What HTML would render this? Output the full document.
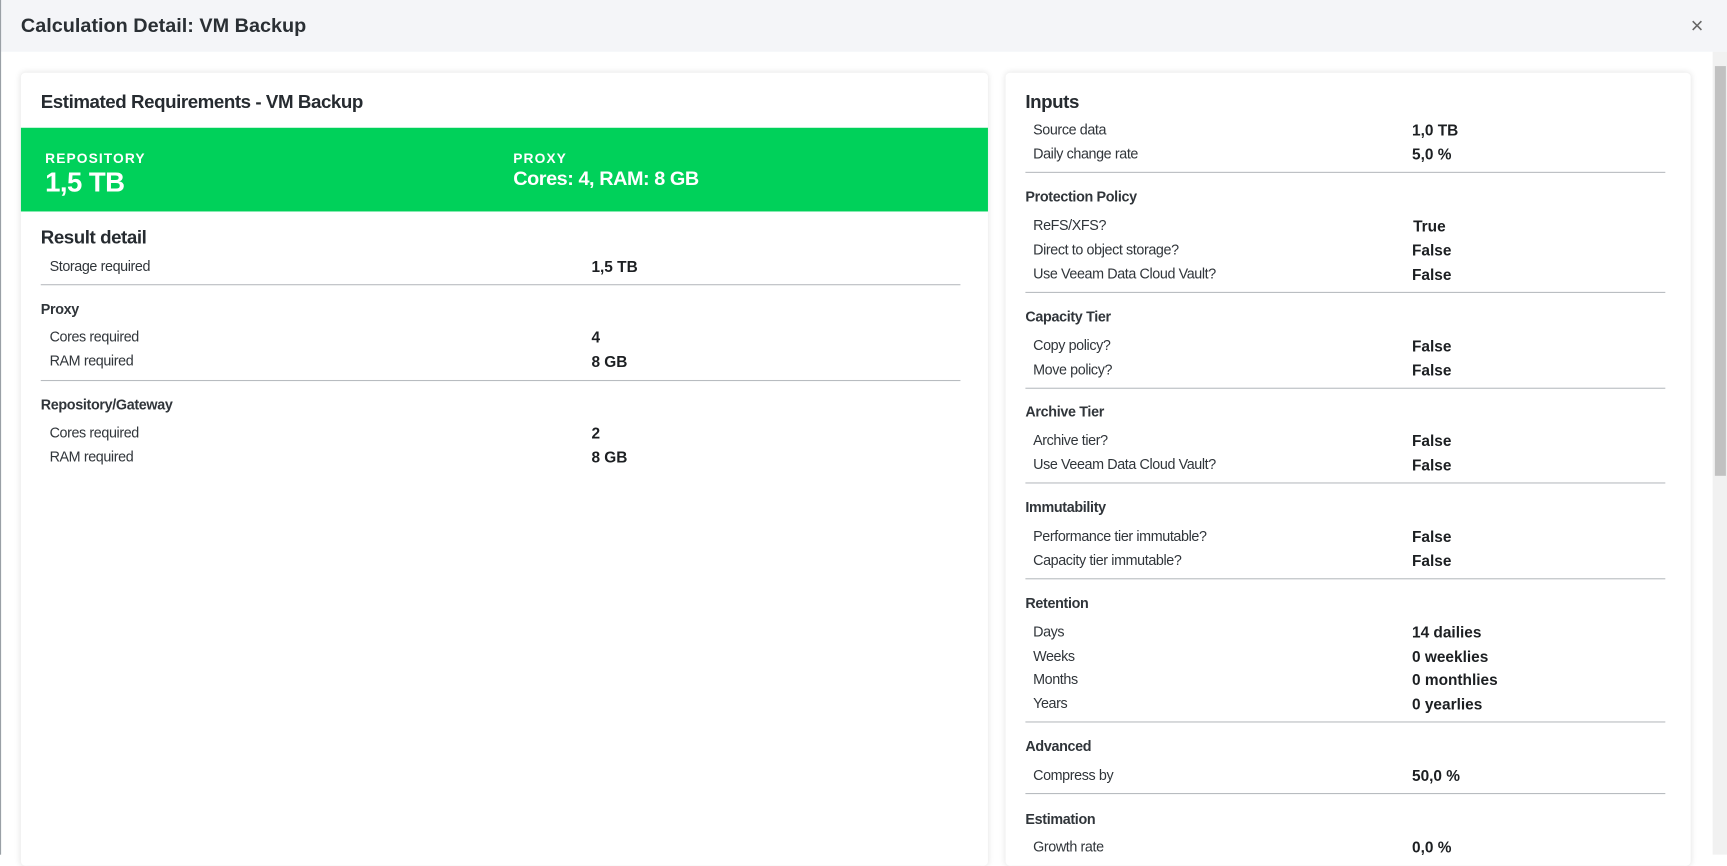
<!DOCTYPE html>
<html><head><meta charset="utf-8"><style>
html,body{margin:0;padding:0;width:1727px;height:855px;overflow:hidden;background:#fff}
#w{position:absolute;left:0;top:0;width:1568px;height:776px;transform:scale(1.1014);transform-origin:0 0;font-family:"Liberation Sans",sans-serif;color:#2b3035}
.hdr{position:absolute;left:0;top:0;width:1568px;height:47px;background:#f4f5f8}
.lb{position:absolute;left:0;top:0;width:1px;height:776px;background:#9aa0a6}
.t{position:absolute;white-space:nowrap;line-height:18px}
.card{position:absolute;background:#fff;border-radius:4px;box-shadow:0 0 6px rgba(0,0,0,.12)}
.l{font-size:13px;letter-spacing:-0.35px;color:#30353a}
.v{font-size:14px;font-weight:bold;color:#1c1f22}
.h{font-size:13px;font-weight:bold;letter-spacing:-0.3px;color:#30353a}
.big{font-size:17px;font-weight:bold;letter-spacing:-0.4px;color:#262b30}
.d{position:absolute;height:1px;background:#b8bcc0}
</style></head><body><div id="w">
<div class="hdr"></div><div class="lb"></div>
<div class="t" style="left:19px;top:13px;font-size:18px;font-weight:bold;color:#2a2f34;line-height:20px">Calculation Detail: VM Backup</div>
<div class="t" style="left:1535px;top:13px;font-size:20px;color:#666;line-height:22px">×</div>
<div style="position:absolute;left:1555px;top:47px;width:13px;height:729px;background:#f1f1f1"></div>
<div style="position:absolute;left:1557px;top:60px;width:10px;height:372px;background:#c1c1c1"></div>

<div class="card" style="left:19px;top:66px;width:878px;height:720px"></div>
<div class="t big" style="left:37px;top:84px">Estimated Requirements - VM Backup</div>
<div style="position:absolute;left:19px;top:116px;width:878px;height:76px;background:#00d15a"></div>
<div class="t" style="left:41px;top:135px;font-size:12.5px;font-weight:bold;letter-spacing:1px;color:#fff">REPOSITORY</div>
<div class="t" style="left:41px;top:152px;font-size:25px;font-weight:bold;color:#fff;line-height:28px;letter-spacing:-0.5px">1,5 TB</div>
<div class="t" style="left:466px;top:135px;font-size:12.5px;font-weight:bold;letter-spacing:1px;color:#fff">PROXY</div>
<div class="t" style="left:466px;top:151px;font-size:18px;font-weight:bold;color:#fff;line-height:22px;letter-spacing:-0.4px">Cores: 4, RAM: 8 GB</div>
<div class="t big" style="left:37px;top:207px">Result detail</div>
<div class="t l" style="left:45px;top:233px">Storage required</div><div class="t v" style="left:537px;top:233px">1,5 TB</div>
<div class="d" style="left:37px;top:258px;width:835px"></div>
<div class="t h" style="left:37px;top:272px">Proxy</div>
<div class="t l" style="left:45px;top:297px">Cores required</div><div class="t v" style="left:537px;top:297px">4</div>
<div class="t l" style="left:45px;top:319px">RAM required</div><div class="t v" style="left:537px;top:319px">8 GB</div>
<div class="d" style="left:37px;top:345px;width:835px"></div>
<div class="t h" style="left:37px;top:359px">Repository/Gateway</div>
<div class="t l" style="left:45px;top:384px">Cores required</div><div class="t v" style="left:537px;top:384px">2</div>
<div class="t l" style="left:45px;top:406px">RAM required</div><div class="t v" style="left:537px;top:406px">8 GB</div>

<div class="card" style="left:913px;top:66px;width:622px;height:720px"></div>
<div class="t big" style="left:931px;top:84px">Inputs</div>
<div class="t l" style="left:938px;top:109px">Source data</div><div class="t v" style="left:1282px;top:109px">1,0 TB</div>
<div class="t l" style="left:938px;top:131px">Daily change rate</div><div class="t v" style="left:1282px;top:131px">5,0 %</div>
<div class="d" style="left:931px;top:156px;width:581px"></div>
<div class="t h" style="left:931px;top:170px">Protection Policy</div>
<div class="t l" style="left:938px;top:196px">ReFS/XFS?</div><div class="t v" style="left:1283px;top:196px">True</div>
<div class="t l" style="left:938px;top:218px">Direct to object storage?</div><div class="t v" style="left:1282px;top:218px">False</div>
<div class="t l" style="left:938px;top:240px">Use Veeam Data Cloud Vault?</div><div class="t v" style="left:1282px;top:240px">False</div>
<div class="d" style="left:931px;top:265px;width:581px"></div>
<div class="t h" style="left:931px;top:279px">Capacity Tier</div>
<div class="t l" style="left:938px;top:305px">Copy policy?</div><div class="t v" style="left:1282px;top:305px">False</div>
<div class="t l" style="left:938px;top:327px">Move policy?</div><div class="t v" style="left:1282px;top:327px">False</div>
<div class="d" style="left:931px;top:352px;width:581px"></div>
<div class="t h" style="left:931px;top:365px">Archive Tier</div>
<div class="t l" style="left:938px;top:391px">Archive tier?</div><div class="t v" style="left:1282px;top:391px">False</div>
<div class="t l" style="left:938px;top:413px">Use Veeam Data Cloud Vault?</div><div class="t v" style="left:1282px;top:413px">False</div>
<div class="d" style="left:931px;top:438px;width:581px"></div>
<div class="t h" style="left:931px;top:452px">Immutability</div>
<div class="t l" style="left:938px;top:478px">Performance tier immutable?</div><div class="t v" style="left:1282px;top:478px">False</div>
<div class="t l" style="left:938px;top:500px">Capacity tier immutable?</div><div class="t v" style="left:1282px;top:500px">False</div>
<div class="d" style="left:931px;top:525px;width:581px"></div>
<div class="t h" style="left:931px;top:539px">Retention</div>
<div class="t l" style="left:938px;top:565px">Days</div><div class="t v" style="left:1282px;top:565px">14 dailies</div>
<div class="t l" style="left:938px;top:587px">Weeks</div><div class="t v" style="left:1282px;top:587px">0 weeklies</div>
<div class="t l" style="left:938px;top:608px">Months</div><div class="t v" style="left:1282px;top:608px">0 monthlies</div>
<div class="t l" style="left:938px;top:630px">Years</div><div class="t v" style="left:1282px;top:630px">0 yearlies</div>
<div class="d" style="left:931px;top:655px;width:581px"></div>
<div class="t h" style="left:931px;top:669px">Advanced</div>
<div class="t l" style="left:938px;top:695px">Compress by</div><div class="t v" style="left:1282px;top:695px">50,0 %</div>
<div class="d" style="left:931px;top:720px;width:581px"></div>
<div class="t h" style="left:931px;top:735px">Estimation</div>
<div class="t l" style="left:938px;top:760px">Growth rate</div><div class="t v" style="left:1282px;top:760px">0,0 %</div>
</div></body></html>
